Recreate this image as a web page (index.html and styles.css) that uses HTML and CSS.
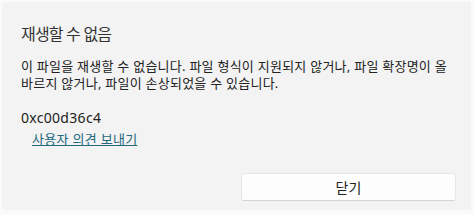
FILE: index.html
```html
<!DOCTYPE html>
<html lang="ko">
<head>
<meta charset="utf-8">
<link rel="stylesheet" href="styles.css">
</head>
<body>
<div class="dialog">
  <div class="title">재생할 수 없음</div>
  <div class="message">이 파일을 재생할 수 없습니다. 파일 형식이 지원되지 않거나, 파일 확장명이 올바르지 않거나, 파일이 손상되었을 수 있습니다.</div>
  <div class="code">0xc00d36c4</div>
  <a class="link" href="#">사용자 의견 보내기</a>
  <div class="footer">
    <button class="btn">닫기</button>
  </div>
</div>
</body>
</html>
```
FILE: styles.css
```css
html, body {
  margin: 0;
  padding: 0;
  background: #fafafa;
}
body {
  width: 474px;
  height: 215px;
  overflow: hidden;
  font-family: "Noto Sans", "Noto Sans CJK KR", sans-serif;
  color: #222;
}
.dialog {
  box-sizing: border-box;
  width: 469px;
  height: 208px;
  margin: 2px 0 0 2px;
  padding: 21px 15px 0 19px;
  background: #f3f3f3;
  display: flex;
  flex-direction: column;
}
.title {
  font-size: 16px;
  line-height: 22px;
  letter-spacing: -0.8px;
  color: #333;
}
.message {
  margin-top: 13px;
  margin-right: 3px;
  font-size: 13px;
  line-height: 17px;
  letter-spacing: 0.25px;
}
.code {
  margin-top: 17px;
  font-size: 14px;
  line-height: 18px;
  letter-spacing: 0.3px;
}
.link {
  align-self: flex-start;
  margin-left: 11px;
  margin-top: 3px;
  font-size: 13px;
  line-height: 18px;
  letter-spacing: 0.3px;
  color: #22697d;
  text-decoration: underline;
}
.footer {
  margin-top: auto;
  margin-bottom: 9px;
  display: flex;
  justify-content: flex-end;
}
.btn {
  width: 215px;
  height: 28px;
  background: #fdfdfd;
  border: 1px solid #e6e6e6;
  border-bottom-color: #d4d4d4;
  border-radius: 3px;
  font-family: "Noto Sans", "Noto Sans CJK KR", sans-serif;
  font-size: 14px;
  color: #222;
  padding: 0;
}
```
